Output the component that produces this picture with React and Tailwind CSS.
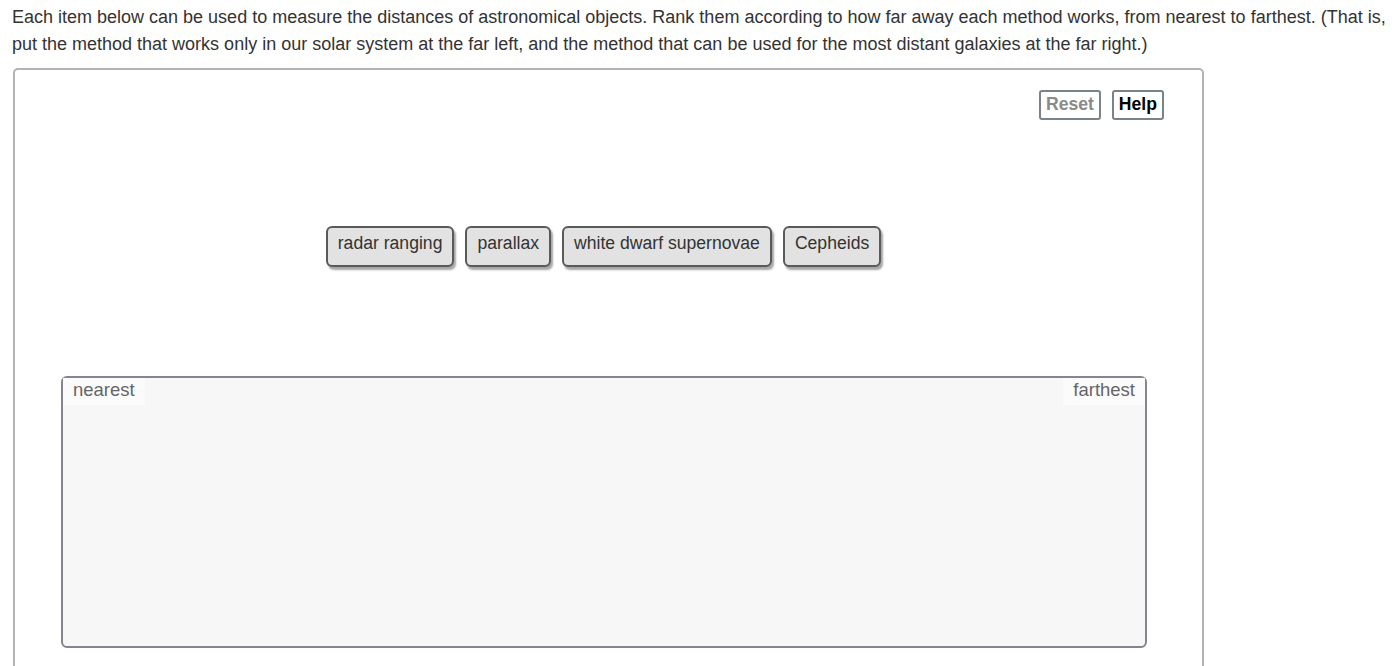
export default function App() {
  const items = ["radar ranging", "parallax", "white dwarf supernovae", "Cepheids"];

  return (
    <div className="w-[1396px] h-[666px] overflow-hidden bg-white font-['Liberation_Sans',Arial,sans-serif] text-[#333]">
      {/* ── Question ── */}
      <p className="px-[12px] pt-[4px] text-[18px] leading-[27px] text-[#333] whitespace-nowrap">
        Each item below can be used to measure the distances of astronomical objects. Rank them according to how far away each method works, from nearest to farthest. (That is,
        <br />
        put the method that works only in our solar system at the far left, and the method that can be used for the most distant galaxies at the far right.)
      </p>

      {/* ── Ranking panel ── */}
      <div className="ml-[13px] mt-[10px] w-[1191px] h-[620px] border-2 border-[#b3b3b3] rounded-[5px] flex flex-col">
        <div className="flex justify-end gap-[11px] pr-[38px] pt-[20px]">
          <button className="h-[30px] px-[5px] border-2 border-[#7a838a] rounded-[3px] bg-white text-[17.6px] font-bold text-[#8a8a8a] leading-none">
            Reset
          </button>
          <button className="h-[30px] px-[5px] border-2 border-[#7a838a] rounded-[3px] bg-white text-[17.6px] font-bold text-black leading-none">
            Help
          </button>
        </div>

        <div className="flex justify-center gap-[11px] mt-[106px] pr-[10px]">
          {items.map((t) => (
            <div
              key={t}
              className="h-[41px] px-[10px] flex items-center bg-[#e2e2e2] border-2 border-[#5a5a5a] rounded-[6px] shadow-[2px_3px_2px_rgba(0,0,0,0.35)] text-[17.6px] text-[#333] pb-[6px]"
            >
              {t}
            </div>
          ))}
        </div>

        <div className="ml-[46px] mt-[109px] w-[1086px] h-[272px] bg-[#f7f7f7] border-2 border-[#858590] rounded-[6px] flex justify-between items-start">
          <span className="px-[10px] h-[27px] leading-[24px] bg-[#fbfbfb] text-[18.5px] text-[#666]">nearest</span>
          <span className="px-[10px] h-[27px] leading-[24px] bg-[#fbfbfb] text-[18.5px] text-[#666]">farthest</span>
        </div>
      </div>
    </div>
  );
}
